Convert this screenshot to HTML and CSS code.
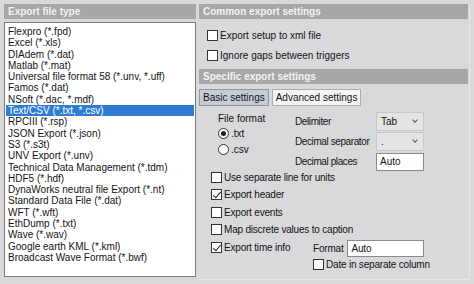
FILE: index.html
```html
<!DOCTYPE html>
<html lang="en">
<head>
    <meta charset="UTF-8">
    <title>Export settings</title>
    <link rel="stylesheet" href="styles.css">
</head>
<body>
    <div class="dialog">
        <div class="left-panel">
            <div class="section-header">Export file type</div>
            <ul class="file-list">
                <li>Flexpro (*.fpd)</li>
                <li>Excel (*.xls)</li>
                <li>DIAdem (*.dat)</li>
                <li>Matlab (*.mat)</li>
                <li>Universal file format 58 (*.unv, *.uff)</li>
                <li>Famos (*.dat)</li>
                <li>NSoft (*.dac, *.mdf)</li>
                <li class="selected">Text/CSV (*.txt, *.csv)</li>
                <li>RPCIII (*.rsp)</li>
                <li>JSON Export (*.json)</li>
                <li>S3 (*.s3t)</li>
                <li>UNV Export (*.unv)</li>
                <li>Technical Data Management (*.tdm)</li>
                <li>HDF5 (*.hdf)</li>
                <li>DynaWorks neutral file Export (*.nt)</li>
                <li>Standard Data File (*.dat)</li>
                <li>WFT (*.wft)</li>
                <li>EthDump (*.txt)</li>
                <li>Wave (*.wav)</li>
                <li>Google earth KML (*.kml)</li>
                <li>Broadcast Wave Format (*.bwf)</li>
            </ul>
        </div>

        <div class="right-panel">
            <div class="section-header">Common export settings</div>
            <div class="common-options">
                <label class="check-row"><span class="checkbox"></span>Export setup to xml file</label>
                <label class="check-row"><span class="checkbox"></span>Ignore gaps between triggers</label>
            </div>

            <div class="section-header">Specific export settings</div>
            <div class="tabs">
                <div class="tab active">Basic settings</div>
                <div class="tab">Advanced settings</div>
            </div>

            <div class="basic-settings">
                <div class="format-row">
                    <div class="file-format">
                        <div class="group-label">File format</div>
                        <label class="radio-row"><span class="radio checked"></span>.txt</label>
                        <label class="radio-row"><span class="radio"></span>.csv</label>
                    </div>
                    <div class="fields">
                        <div class="field-row">
                            <span class="field-label">Delimiter</span>
                            <div class="select">Tab<span class="chevron"></span></div>
                        </div>
                        <div class="field-row">
                            <span class="field-label">Decimal separator</span>
                            <div class="select">.<span class="chevron"></span></div>
                        </div>
                        <div class="field-row">
                            <span class="field-label">Decimal places</span>
                            <div class="text-input">Auto</div>
                        </div>
                    </div>
                </div>

                <div class="options">
                    <label class="check-row"><span class="checkbox"></span>Use separate line for units</label>
                    <label class="check-row"><span class="checkbox checked"></span>Export header</label>
                    <label class="check-row"><span class="checkbox"></span>Export events</label>
                    <label class="check-row"><span class="checkbox"></span>Map discrete values to caption</label>
                    <div class="time-row">
                        <label class="check-row time-check"><span class="checkbox checked"></span>Export time info</label>
                        <div class="time-format">
                            <div class="format-line">
                                <span class="format-label">Format</span>
                                <div class="text-input wide">Auto</div>
                            </div>
                            <label class="check-row date-check"><span class="checkbox"></span>Date in separate column</label>
                        </div>
                    </div>
                </div>
            </div>
        </div>
    </div>
</body>
</html>
```

FILE: styles.css
```css
:root {
    --bg: #d9d8db;
    --header-bg: #a7a7a8;
    --header-text: #f3f3f3;
    --text: #141414;
    --border: #7a7a7a;
    --select-blue: #2f7cd3;
}

* {
    margin: 0;
    padding: 0;
    box-sizing: border-box;
}

body {
    background-color: var(--bg);
    color: var(--text);
    font-family: 'Liberation Sans', Arial, sans-serif;
    font-size: 10px;
    width: 474px;
    height: 284px;
    overflow: hidden;
}

.dialog {
    display: flex;
    gap: 3px;
    padding: 4px 4px 0 4px;
    height: 280px;
}

.left-panel {
    width: 192px;
    display: flex;
    flex-direction: column;
}

.right-panel {
    flex: 1;
    display: flex;
    flex-direction: column;
    border-right: 1px solid #e6e6e8;
    border-bottom: 1px solid #e6e6e8;
    padding-right: 1px;
}

.section-header {
    height: 15px;
    line-height: 15px;
    background-color: var(--header-bg);
    color: var(--header-text);
    font-weight: 700;
    padding-left: 4px;
}

/* file type list */
.file-list {
    list-style: none;
    margin-top: 3px;
    height: 255px;
    background-color: #fff;
    border: 1px solid var(--border);
    padding: 3px 1px;
}

.file-list li {
    height: 11.3px;
    line-height: 11.3px;
    padding-left: 2px;
    white-space: nowrap;
}

.file-list li.selected {
    background-color: var(--select-blue);
    color: #fff;
}

/* checkboxes */
.check-row {
    display: flex;
    align-items: center;
    gap: 2px;
    height: 20px;
    white-space: nowrap;
}

.checkbox {
    width: 11px;
    height: 11px;
    border: 1px solid #333;
    background-color: #fff;
    position: relative;
    flex-shrink: 0;
}

.checkbox.checked::after {
    content: "";
    position: absolute;
    left: 3px;
    top: 0;
    width: 3px;
    height: 7px;
    border: solid #222;
    border-width: 0 1px 1px 0;
    transform: rotate(40deg);
}

.common-options {
    padding: 6px 0 4px 8px;
}

/* tabs */
.tabs {
    display: flex;
    gap: 3px;
    margin-top: 5px;
}

.tab {
    height: 17px;
    line-height: 15px;
    padding: 0 3px;
    border: 1px solid #adadad;
    background-color: #f4f4f4;
}

.tab.active {
    background-color: #c6ccd4;
    border-color: #8c98a6;
}

/* basic settings */
.basic-settings {
    padding-left: 12px;
}

.format-row {
    display: flex;
    margin-top: 6px;
}

.file-format {
    width: 84px;
    padding-left: 7px;
}

.group-label {
    height: 13px;
    line-height: 13px;
}

.radio-row {
    display: flex;
    align-items: center;
    gap: 2px;
    height: 16.5px;
}

.radio {
    width: 11px;
    height: 11px;
    border: 1px solid #333;
    border-radius: 50%;
    background-color: #fff;
    position: relative;
}

.radio.checked::after {
    content: "";
    position: absolute;
    left: 2px;
    top: 2px;
    width: 5px;
    height: 5px;
    border-radius: 50%;
    background-color: #222;
}

.fields {
    display: flex;
    flex-direction: column;
    gap: 1px;
}

.field-row {
    display: flex;
    align-items: center;
    height: 19px;
}

.field-label {
    width: 81px;
    white-space: nowrap;
    letter-spacing: -0.4px;
}

.select {
    width: 48px;
    height: 19px;
    line-height: 17px;
    padding-left: 4px;
    background-color: #e4e4e4;
    border: 1px solid #c8c8c8;
    position: relative;
}

.chevron {
    position: absolute;
    right: 6px;
    top: 5px;
    width: 4px;
    height: 4px;
    border: solid #555;
    border-width: 0 1px 1px 0;
    transform: rotate(45deg);
}

.text-input {
    width: 48px;
    height: 18px;
    line-height: 16px;
    padding-left: 3px;
    background-color: #fff;
    border: 1px solid #8a8a8a;
}

.text-input.wide {
    width: 77px;
    height: 17px;
    line-height: 15px;
}

.options {
    margin-top: -2.5px;
    letter-spacing: -0.2px;
}

.options .check-row {
    height: 17.5px;
}

.time-row {
    display: flex;
}

.time-check {
    width: 102px;
}

.time-format {
    display: flex;
    flex-direction: column;
}

.format-line {
    display: flex;
    align-items: center;
    gap: 4px;
    margin-top: 1px;
}

.options .date-check {
    height: 16px;
}
```
